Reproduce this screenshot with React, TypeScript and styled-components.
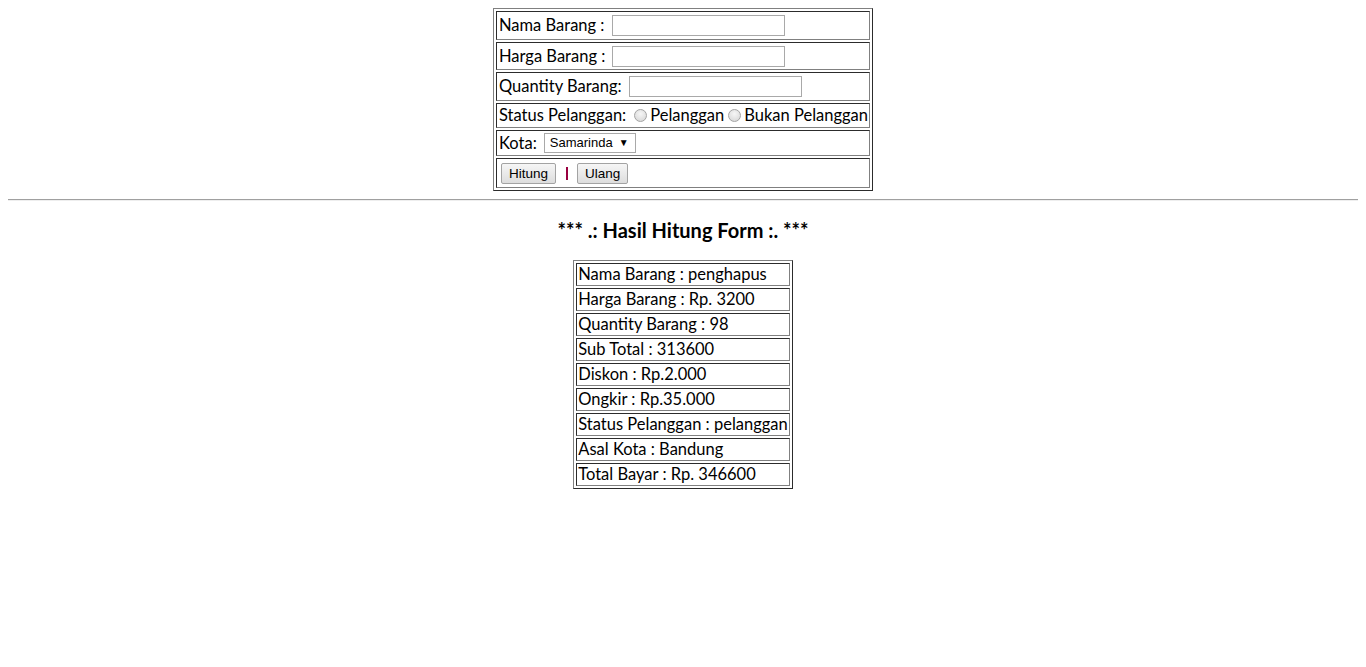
import React from "react";
import styled, { createGlobalStyle } from "styled-components";

const Global = createGlobalStyle`
  html, body { background: #fff; }
  body {
    margin: 8px;
    font-family: Lato, "Liberation Sans", sans-serif;
    font-size: 16.5px;
    color: #000;
  }
`;

const Table = styled.table`
  margin: 0 auto;
  border: 1px outset grey;
  border-spacing: 2px;
  border-collapse: separate;
  font-size: 16.5px;
`;

const Cell = styled.td`
  border: 1px inset grey;
  padding: 1px;
  white-space: nowrap;
`;

const Line = styled.div<{ $h: number }>`
  display: flex;
  align-items: center;
  height: ${(p) => p.$h}px;
  line-height: 19px;
  white-space: pre;
  padding-left: 1px;
`;

const TextInput = styled.input<{ $gap?: number }>`
  box-sizing: border-box;
  width: 173px;
  height: 21px;
  border: 1px solid #a9a9a9;
  padding: 1px 2px;
  margin: 0 0 0 ${(p) => p.$gap ?? 7}px;
  font: 13px "Liberation Sans", Arial, sans-serif;
  background: #fff;
  outline: none;
`;

const Radio = styled.span<{ $left: number }>`
  display: inline-block;
  flex: none;
  width: 11px;
  height: 11px;
  border-radius: 50%;
  border: 1px solid #a4a4a4;
  background: radial-gradient(circle at 50% 35%, #f6f6f6 0%, #dedede 70%, #d0d0d0 100%);
  margin: 0 3px 0 ${(p) => p.$left}px;
  box-sizing: content-box;
`;

const Select = styled.span`
  display: inline-flex;
  align-items: center;
  justify-content: space-between;
  box-sizing: border-box;
  width: 92px;
  height: 20px;
  margin-left: 7px;
  padding: 0 6px 0 5px;
  border: 1px solid #a9a9a9;
  background: #fff;
  font: 13px "Liberation Sans", Arial, sans-serif;
  line-height: 18px;
`;

const Arrow = styled.span`
  font-size: 10px;
`;

const Button = styled.span<{ $left: number }>`
  display: inline-flex;
  align-items: center;
  justify-content: center;
  box-sizing: border-box;
  height: 21px;
  padding: 0 7px;
  border: 1px solid #a3a3a3;
  border-radius: 2px;
  background: linear-gradient(#f6f6f6, #dddddd);
  font: 13.5px "Liberation Sans", Arial, sans-serif;
  margin-left: ${(p) => p.$left}px;
`;

const Sep = styled.span`
  display: inline-block;
  width: 2px;
  height: 13px;
  background: #990040;
  margin: 0 9px 0 10px;
`;

const Rule = styled.hr`
  border: none;
  border-top: 1px solid #a0a0a0;
  border-bottom: 1px solid #eeeeee;
  margin: 8px 0;
`;

const Title = styled.h3`
  text-align: center;
  font-size: 20px;
  line-height: 23px;
  font-weight: bold;
  margin: 18px 0 18px;
  font-family: Lato, "Liberation Sans", sans-serif;
`;

const ResultCell = styled.td`
  border: 1px inset grey;
  padding: 1px;
  height: 19px;
  white-space: nowrap;
  line-height: 19px;
`;

const results = [
  "Nama Barang : penghapus",
  "Harga Barang : Rp. 3200",
  "Quantity Barang : 98",
  "Sub Total : 313600",
  "Diskon : Rp.2.000",
  "Ongkir : Rp.35.000",
  "Status Pelanggan : pelanggan",
  "Asal Kota : Bandung",
  "Total Bayar : Rp. 346600",
];

export default function App() {
  return (
    <>
      <Global />
      <Table>
        <tbody>
          <tr>
            <Cell>
              <Line $h={25}>
                Nama Barang :<TextInput />
              </Line>
            </Cell>
          </tr>
          <tr>
            <Cell>
              <Line $h={24}>
                Harga Barang :<TextInput />
              </Line>
            </Cell>
          </tr>
          <tr>
            <Cell>
              <Line $h={25}>
                Quantity Barang:<TextInput />
              </Line>
            </Cell>
          </tr>
          <tr>
            <Cell>
              <Line $h={21}>
                Status Pelanggan:<Radio $left={8} />Pelanggan<Radio $left={4} />Bukan Pelanggan
              </Line>
            </Cell>
          </tr>
          <tr>
            <Cell>
              <Line $h={22}>
                Kota:
                <Select>
                  Samarinda<Arrow>▼</Arrow>
                </Select>
              </Line>
            </Cell>
          </tr>
          <tr>
            <Cell>
              <Line $h={26}>
                <Button $left={2}>Hitung</Button>
                <Sep />
                <Button $left={0}>Ulang</Button>
              </Line>
            </Cell>
          </tr>
        </tbody>
      </Table>
      <Rule />
      <Title>*** .: Hasil Hitung Form :. ***</Title>
      <Table>
        <tbody>
          {results.map((r) => (
            <tr key={r}>
              <ResultCell>{r}</ResultCell>
            </tr>
          ))}
        </tbody>
      </Table>
    </>
  );
}
